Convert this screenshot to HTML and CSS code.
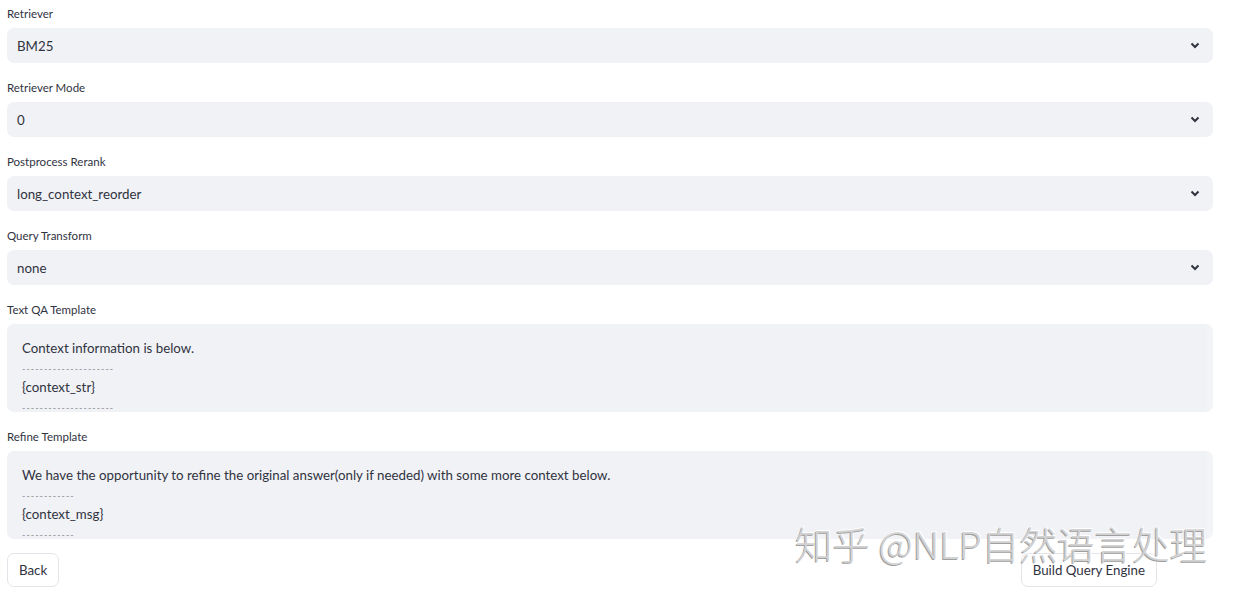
FILE: index.html
```html
<!DOCTYPE html>
<html lang="en">
<head>
    <meta charset="UTF-8">
    <title>Query Engine Settings</title>
    <link rel="stylesheet" href="styles.css">
</head>
<body>

    <!-- Settings Form -->
    <div class="form">
        <div class="field">
            <div class="label">Retriever</div>
            <div class="select">
                <span>BM25</span>
                <svg class="chevron" width="10" height="7" viewBox="0 0 10 7"><path d="M1.5 1.5 L5 5 L8.5 1.5" fill="none" stroke="#31333f" stroke-width="2"/></svg>
            </div>
        </div>

        <div class="field">
            <div class="label">Retriever Mode</div>
            <div class="select">
                <span>0</span>
                <svg class="chevron" width="10" height="7" viewBox="0 0 10 7"><path d="M1.5 1.5 L5 5 L8.5 1.5" fill="none" stroke="#31333f" stroke-width="2"/></svg>
            </div>
        </div>

        <div class="field">
            <div class="label">Postprocess Rerank</div>
            <div class="select">
                <span>long_context_reorder</span>
                <svg class="chevron" width="10" height="7" viewBox="0 0 10 7"><path d="M1.5 1.5 L5 5 L8.5 1.5" fill="none" stroke="#31333f" stroke-width="2"/></svg>
            </div>
        </div>

        <div class="field">
            <div class="label">Query Transform</div>
            <div class="select">
                <span>none</span>
                <svg class="chevron" width="10" height="7" viewBox="0 0 10 7"><path d="M1.5 1.5 L5 5 L8.5 1.5" fill="none" stroke="#31333f" stroke-width="2"/></svg>
            </div>
        </div>

        <div class="field">
            <div class="label">Text QA Template</div>
            <div class="textarea">
                <div>Context information is below.</div>
                <div class="dashes">---------------------</div>
                <div>{context_str}</div>
                <div class="dashes">---------------------</div>
            </div>
        </div>

        <div class="field">
            <div class="label">Refine Template</div>
            <div class="textarea">
                <div>We have the opportunity to refine the original answer(only if needed) with some more context below.</div>
                <div class="dashes">------------</div>
                <div>{context_msg}</div>
                <div class="dashes">------------</div>
            </div>
        </div>

        <!-- Buttons -->
        <div class="actions">
            <button class="btn">Back</button>
            <button class="btn">Build Query Engine</button>
        </div>
    </div>

    <!-- Watermark -->
    <div class="watermark">知乎 @NLP自然语言处理</div>

</body>
</html>
```

FILE: styles.css
```css
/* General Styles */
html, body {
    margin: 0;
    padding: 0;
    background: #ffffff;
    font-family: 'Lato', 'Noto Sans', sans-serif;
    color: #31333f;
    overflow: hidden;
}

/* Form */
.form {
    width: 1206px;
    padding: 4px 0 0 7px;
}

.field {
    margin-bottom: 15px;
}

.label {
    height: 20px;
    line-height: 20px;
    font-size: 11.5px;
    margin-bottom: 4px;
}

/* Select Boxes */
.select {
    height: 35px;
    background: #f0f2f6;
    border-radius: 7px;
    display: flex;
    align-items: center;
    justify-content: space-between;
    padding: 0 13px 0 10px;
    font-size: 13.3px;
}

.chevron {
    display: block;
}

/* Text Areas */
.textarea {
    height: 88px;
    box-sizing: border-box;
    background: #f0f2f6;
    border-radius: 7px;
    padding: 15px 15px 0;
    font-size: 13.3px;
    line-height: 19.5px;
    overflow: hidden;
    border-right: 6px solid #f3f4f7;
}

.dashes {
    color: #8a8c94;
    font-size: 9px;
    letter-spacing: 1.05px;
}

/* Buttons */
.actions {
    display: flex;
    justify-content: space-between;
    padding-right: 56px;
    margin-top: -1px;
}

.btn {
    height: 34px;
    padding: 0 11px;
    background: #ffffff;
    border: 1px solid #e4e5ea;
    border-radius: 7px;
    font-family: 'Lato', 'Noto Sans', sans-serif;
    font-size: 13.3px;
    color: #31333f;
}

/* Watermark */
.watermark {
    position: absolute;
    left: 795px;
    top: 520px;
    font-family: 'Noto Sans CJK SC', sans-serif;
    font-weight: 300;
    font-size: 37.6px;
    line-height: 46px;
    color: #d2d2d2;
    text-shadow: -1px 1px 0 #a0a0a0, 1px -1px 0 #ffffff;
    white-space: nowrap;
    pointer-events: none;
}
```
